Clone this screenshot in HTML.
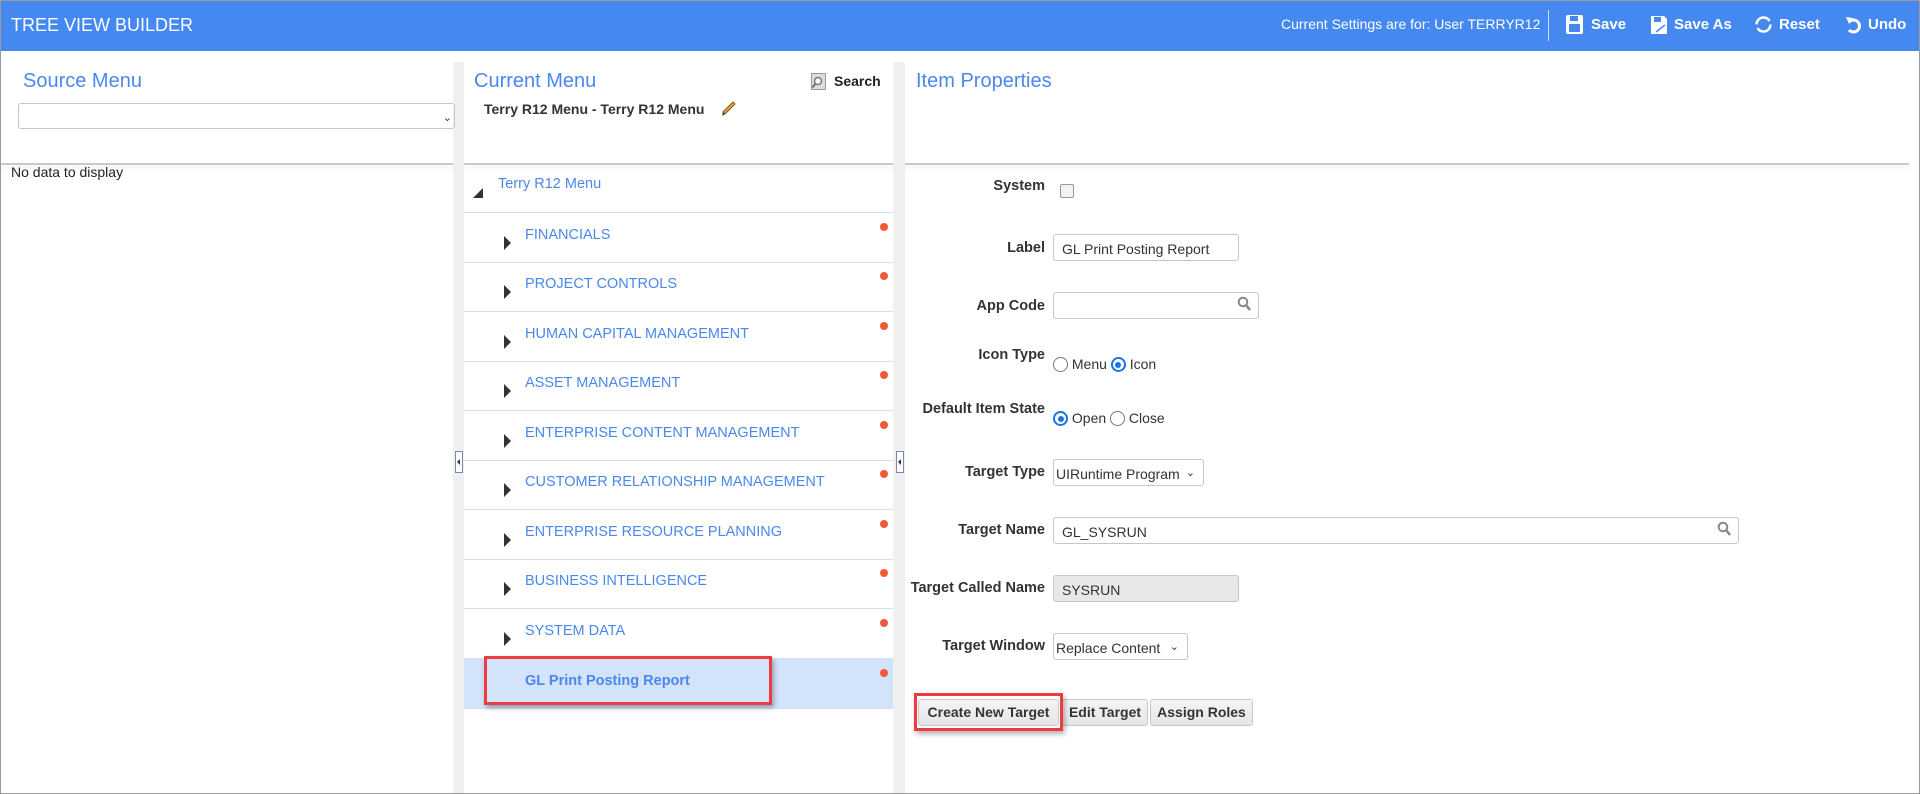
<!DOCTYPE html>
<html><head><meta charset="utf-8"><style>
*{margin:0;padding:0;box-sizing:border-box}
body{width:1920px;height:794px;position:relative;overflow:hidden;background:#fff;font-family:"Liberation Sans",Arial,sans-serif;color:#333}
.a{position:absolute}
#frame{left:0;top:0;width:1920px;height:794px;border:1px solid #9a9a9a;z-index:50;pointer-events:none}
#hdr{left:0;top:0;width:1920px;height:51px;background:#4488f0;color:#fff}
.hb{font-weight:bold;font-size:15px;color:#fff;top:16px}
.strip{background:#eff0f2;top:62px;height:732px}
.ttl{color:#4a88ee;font-size:20px;top:70px}
.hline{height:2px;background:#c9c9c9;top:163px;box-shadow:0 3px 5px rgba(0,0,0,.08)}
.row{left:464px;width:429px;height:50px;border-bottom:1px solid #cfe0f8}
.row .t{position:absolute;left:61px;top:14px;font-size:14.5px;color:#4a88ee}
.row .ar{position:absolute;left:40px;top:23px;width:0;height:0;border-left:7px solid #333;border-top:7px solid transparent;border-bottom:7px solid transparent}
.row .dt{position:absolute;left:416px;top:10px;width:8px;height:8px;border-radius:50%;background:#ee5a36}
.lb{font-weight:bold;font-size:14.5px;color:#333;right:875px;text-align:right;white-space:nowrap}
.in{border:1px solid #c6c6c6;border-radius:3px;background:#fff;font-size:14px;padding:6px 8px;height:27px;color:#333}
.rad{display:inline-block;width:15px;height:15px;border:1px solid #777;border-radius:50%;vertical-align:-3px;position:relative}
.rad.on{border:2px solid #1a73e8}
.rad.on:after{content:"";position:absolute;left:2.5px;top:2.5px;width:6px;height:6px;border-radius:50%;background:#1a73e8}
.btn{top:699px;height:27px;border:1px solid #c8c8c8;border-radius:3px;background:linear-gradient(#f4f4f4,#e4e6e8);font-weight:bold;font-size:14px;color:#333;text-align:center;line-height:25px}
.chev{font-size:11px;position:absolute;right:8px;top:6px;color:#333}
</style></head><body>
<div class="a" id="hdr">
 <div class="a" style="left:11px;top:15px;font-size:18px">TREE VIEW BUILDER</div>
 <div class="a" style="left:1281px;top:16px;font-size:14px">Current Settings are for: User TERRYR12</div>
 <div class="a" style="left:1548px;top:10px;width:1px;height:31px;background:#cfe0ff"></div>
 <svg class="a" style="left:1566px;top:15px" width="17" height="19" viewBox="0 0 17 19"><rect x="0" y="0" width="17" height="19" rx="2" fill="#fff"/><rect x="4" y="1" width="8" height="5" fill="#4488f0"/><rect x="3" y="9" width="11" height="8" fill="#4488f0"/></svg>
 <div class="a hb" style="left:1591px">Save</div>
 <svg class="a" style="left:1650px;top:15px" width="18" height="20" viewBox="0 0 18 20"><path d="M1 1h13l3 3v15H1z" fill="#fff"/><rect x="4" y="2" width="7" height="5" fill="#4488f0"/><path d="M6 17l9-7" stroke="#4488f0" stroke-width="1.5"/></svg>
 <div class="a hb" style="left:1674px">Save As</div>
 <svg class="a" style="left:1754px;top:15px" width="19" height="19" viewBox="0 0 19 19"><circle cx="9.5" cy="9.5" r="7" fill="none" stroke="#fff" stroke-width="2.5" stroke-dasharray="18 4"/></svg>
 <div class="a hb" style="left:1779px">Reset</div>
 <svg class="a" style="left:1845px;top:14px" width="16" height="21" viewBox="0 0 16 21"><path d="M4 8a6 6 0 1 1 0 8" fill="none" stroke="#fff" stroke-width="3"/><path d="M1 3l7 1-4 6z" fill="#fff"/></svg>
 <div class="a hb" style="left:1868px">Undo</div>
</div>

<div class="a strip" style="left:453px;width:11px"></div>
<div class="a strip" style="left:893px;width:12px"></div>

<div class="a ttl" style="left:23px">Source Menu</div>
<div class="a" style="left:18px;top:103px;width:437px;height:26px;border:1px solid #c6c6c6;border-radius:3px"><span class="chev" style="right:2px;top:7px">&#8964;</span></div>
<div class="a hline" style="left:0;width:453px"></div>
<div class="a" style="left:11px;top:164px;font-size:14px;color:#222">No data to display</div>
<div class="a" style="left:455px;top:451px;width:8px;height:22px;border:1px solid #7a8aa8;background:#fff"></div>
<div class="a" style="left:457px;top:459px;border-right:3px solid #333;border-top:3px solid transparent;border-bottom:3px solid transparent"></div>

<div class="a ttl" style="left:474px">Current Menu</div>
<svg class="a" style="left:811px;top:73px" width="15" height="17" viewBox="0 0 15 17"><rect x="0.5" y="0.5" width="14" height="16" fill="#ddd" stroke="#999"/><circle cx="7" cy="8" r="3.5" fill="#fff" stroke="#777" stroke-width="1.5"/><path d="M4.5 10.5l-3 4" stroke="#777" stroke-width="2"/></svg>
<div class="a" style="left:834px;top:73px;font-weight:bold;font-size:14px;color:#222">Search</div>
<div class="a" style="left:484px;top:101px;font-weight:bold;font-size:14px;color:#333">Terry R12 Menu - Terry R12 Menu</div>
<svg class="a" style="left:720px;top:100px" width="17" height="17" viewBox="0 0 17 17"><path d="M3 12L13 2l2 2L5 14z" fill="#e8a33a" stroke="#8a5a10" stroke-width="1"/><path d="M3 12l-1 4 3-2z" fill="#333"/></svg>
<div class="a hline" style="left:464px;width:429px"></div>
<div class="a" style="left:473px;top:188px;width:0;height:0;border-left:10px solid transparent;border-bottom:10px solid #333"></div>
<div class="a" style="left:498px;top:176px;font-size:14.5px;color:#4a88ee">Terry R12 Menu</div>
<div class="a" style="left:464px;top:212px;width:429px;height:1px;background:#cfe0f8"></div>
<div class="a row" style="top:213px"><span class="ar"></span><span class="t">FINANCIALS</span><span class="dt"></span></div>
<div class="a row" style="top:262px"><span class="ar"></span><span class="t">PROJECT CONTROLS</span><span class="dt"></span></div>
<div class="a row" style="top:312px"><span class="ar"></span><span class="t">HUMAN CAPITAL MANAGEMENT</span><span class="dt"></span></div>
<div class="a row" style="top:361px"><span class="ar"></span><span class="t">ASSET MANAGEMENT</span><span class="dt"></span></div>
<div class="a row" style="top:411px"><span class="ar"></span><span class="t">ENTERPRISE CONTENT MANAGEMENT</span><span class="dt"></span></div>
<div class="a row" style="top:460px"><span class="ar"></span><span class="t">CUSTOMER RELATIONSHIP MANAGEMENT</span><span class="dt"></span></div>
<div class="a row" style="top:510px"><span class="ar"></span><span class="t">ENTERPRISE RESOURCE PLANNING</span><span class="dt"></span></div>
<div class="a row" style="top:559px"><span class="ar"></span><span class="t">BUSINESS INTELLIGENCE</span><span class="dt"></span></div>
<div class="a row" style="top:609px"><span class="ar"></span><span class="t">SYSTEM DATA</span><span class="dt"></span></div>
<div class="a row" style="top:659px;background:#d2e3fa;border-bottom:none"><span class="t" style="font-weight:bold">GL Print Posting Report</span><span class="dt"></span></div>
<div class="a" style="left:484px;top:656px;width:288px;height:49px;border:3px solid #ee3b40;box-shadow:2px 3px 5px rgba(0,0,0,.3)"></div>
<div class="a" style="left:896px;top:451px;width:8px;height:22px;border:1px solid #7a8aa8;background:#fff"></div>
<div class="a" style="left:898px;top:459px;border-right:3px solid #333;border-top:3px solid transparent;border-bottom:3px solid transparent"></div>

<div class="a ttl" style="left:916px">Item Properties</div>
<div class="a hline" style="left:905px;width:1004px"></div>
<div class="a lb" style="top:178px">System</div>
<div class="a" style="left:1060px;top:184px;width:14px;height:14px;border:1px solid #999;border-radius:2px;background:#f2f2f2"></div>
<div class="a lb" style="top:240px">Label</div>
<div class="a in" style="left:1053px;top:234px;width:186px">GL Print Posting Report</div>
<div class="a lb" style="top:298px">App Code</div>
<div class="a in" style="left:1053px;top:292px;width:206px"></div>
<svg class="a" style="left:1237px;top:296px" width="14" height="16" viewBox="0 0 14 16"><circle cx="6" cy="6" r="4.3" fill="none" stroke="#888" stroke-width="2"/><path d="M9 9l4 5" stroke="#888" stroke-width="2.5"/></svg>
<div class="a lb" style="top:347px">Icon Type</div>
<div class="a" style="left:1053px;top:356px;font-size:14px"><span class="rad"></span> Menu <span class="rad on"></span> Icon</div>
<div class="a lb" style="top:401px">Default Item State</div>
<div class="a" style="left:1053px;top:410px;font-size:14px"><span class="rad on"></span> Open <span class="rad"></span> Close</div>
<div class="a lb" style="top:464px">Target Type</div>
<div class="a in" style="left:1053px;top:459px;width:151px;padding-left:2px">UIRuntime Program<span class="chev">&#8964;</span></div>
<div class="a lb" style="top:522px">Target Name</div>
<div class="a in" style="left:1053px;top:517px;width:686px">GL_SYSRUN</div>
<svg class="a" style="left:1717px;top:521px" width="14" height="16" viewBox="0 0 14 16"><circle cx="6" cy="6" r="4.3" fill="none" stroke="#888" stroke-width="2"/><path d="M9 9l4 5" stroke="#888" stroke-width="2.5"/></svg>
<div class="a lb" style="top:580px">Target Called Name</div>
<div class="a in" style="left:1053px;top:575px;width:186px;background:#e8e8e8">SYSRUN</div>
<div class="a lb" style="top:638px">Target Window</div>
<div class="a in" style="left:1053px;top:633px;width:135px;padding-left:2px">Replace Content<span class="chev">&#8964;</span></div>
<div class="a btn" style="left:918px;width:141px">Create New Target</div>
<div class="a btn" style="left:1062px;width:86px">Edit Target</div>
<div class="a btn" style="left:1150px;width:103px">Assign Roles</div>
<div class="a" style="left:914px;top:693px;width:149px;height:38px;border:3px solid #ee3b40;box-shadow:2px 3px 5px rgba(0,0,0,.3)"></div>
<div class="a" id="frame"></div>
</body></html>
